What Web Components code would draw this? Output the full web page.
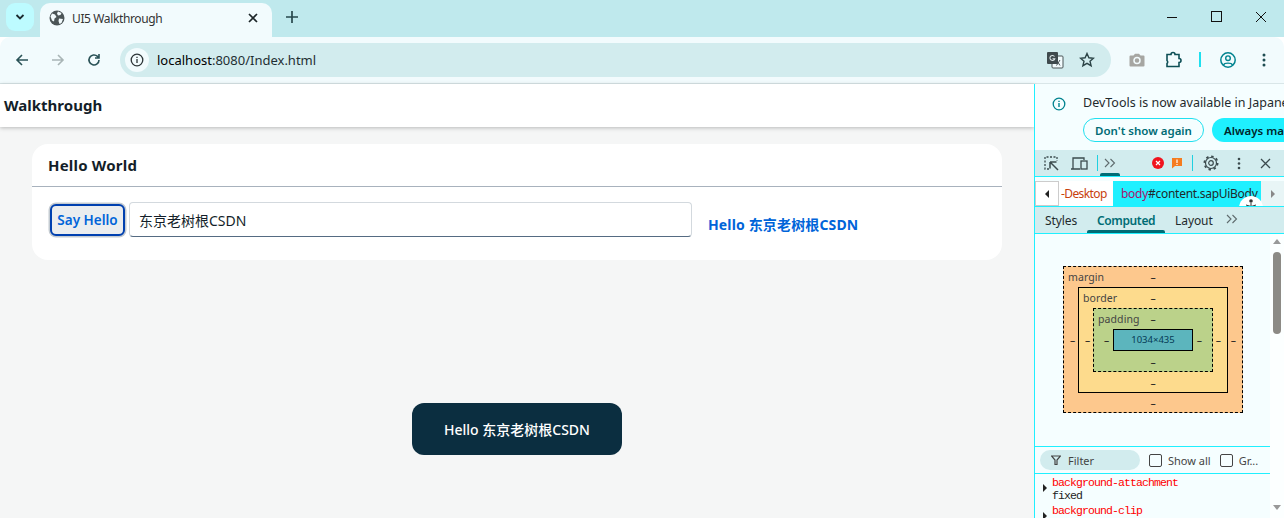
<!DOCTYPE html>
<html><head><meta charset="utf-8"><style>
html,body{margin:0;padding:0;height:518px;overflow:hidden}
body{font-family:"Noto Sans","Noto Sans CJK SC",sans-serif;display:flex;flex-direction:column}
</style></head><body>
<browser-chrome></browser-chrome>
<div style="display:flex;height:434px">
<ui5-page></ui5-page>
<dev-tools></dev-tools>
</div>
<script>
const def=(n,html)=>customElements.define(n,class extends HTMLElement{constructor(){super();this.attachShadow({mode:'open'}).innerHTML=html}});
def('browser-chrome',`<style>
:host{display:block;height:84px;flex:none;font-family:"Noto Sans","Open Sans",sans-serif}
svg{display:block;flex:none}
.strip{height:37px;background:#bfe9ed;display:flex;box-sizing:border-box;position:relative}
.tabsearch{width:28px;height:28px;margin:3px 0 0 6px;border-radius:9px;background:#bdfbff;display:flex;align-items:center;justify-content:center}
.tab{width:232px;height:34px;margin:3px 0 0 6px;background:#f2fbfd;border-radius:10px 10px 0 0;display:flex;align-items:center;box-sizing:border-box;padding:0 14px 4px 9px;font-size:12px;color:#333;gap:7px}
.tab span{flex:1;letter-spacing:-.38px}
.plus{margin:10px 0 0 13px}
.win{margin-left:auto;display:flex;align-items:center;height:34px}
.win div{width:45px;height:34px;display:flex;align-items:center;justify-content:center}
.bar{height:47px;background:#f2fbfd;box-sizing:border-box;border-bottom:1px solid #d9e6e8;display:flex;align-items:center;padding:0 0 1px 14px;border-radius:10px 10px 0 0}
.nav{display:flex;gap:20px;width:106px}
.omni{width:991px;height:34px;background:#d2ecee;border-radius:17px;display:flex;align-items:center;box-sizing:border-box;padding:0 16px 0 5px;font-size:13px;color:#1f2f33}
.info{width:24px;height:24px;border-radius:50%;background:#f2fbfd;display:flex;align-items:center;justify-content:center;margin-right:8px}
.omni b{font-weight:400;color:#000}
.omni .sp{flex:1}
.right{display:flex;align-items:center}
</style>
<div class="strip">
<div class="tabsearch"><svg width="12" height="12" viewBox="0 0 12 12"><path d="M2.500 4l3.500 3.500L9.500 4" fill="none" stroke="#1b2b2f" stroke-width="1.800"/></svg></div>
<div class="tab"><svg width="16" height="16" viewBox="0 0 16 16"><circle cx="8" cy="8" r="7.500" fill="#4b5557"/><path d="M3 3.500l3 1 1.500 2.500-2 1.500-.5 3-2-1-1.500-4zM9 1.500l3.500 1.500-1 2-2.500.5-1-2zM10 8.500l4 .5-1.500 4-2 1-1-3z" fill="#f2fbfd"/></svg><span>UI5 Walkthrough</span><svg width="10" height="10" viewBox="0 0 10 10"><path d="M1 1l8 8M9 1L1 9" stroke="#1d2629" stroke-width="1.700"/></svg></div>
<svg class="plus" width="14" height="14" viewBox="0 0 14 14"><path d="M7 1v12M1 7h12" stroke="#27484c" stroke-width="1.700"/></svg>
<div class="win"><div><svg width="12" height="12"><path d="M1 6.500h10" stroke="#111"/></svg></div><div><svg width="12" height="12"><rect x=".5" y=".5" width="10" height="10" fill="none" stroke="#111" stroke-width="1"/></svg></div><div><svg width="12" height="12" style="margin-right:2px"><path d="M1 1l10 10M11 1L1 11" stroke="#111"/></svg></div></div>
</div>
<div class="bar">
<div class="nav">
<svg width="16" height="16" viewBox="0 0 16 16"><path d="M14 8H3M8 3L3 8l5 5" fill="none" stroke="#2a5257" stroke-width="1.600"/></svg>
<svg width="16" height="16" viewBox="0 0 16 16"><path d="M2 8h11M8 3l5 5-5 5" fill="none" stroke="#a9b5b6" stroke-width="1.600"/></svg>
<svg width="16" height="16" viewBox="0 0 16 16"><path d="M13 8a5 5 0 1 1-1.500-3.600L13 6M13 2v4H9" fill="none" stroke="#2a5257" stroke-width="1.600"/></svg>
</div>
<div class="omni"><div class="info"><svg width="14" height="14" viewBox="0 0 14 14"><circle cx="7" cy="7" r="5.800" fill="none" stroke="#2c3437" stroke-width="1.300"/><path d="M7 6v4M7 3.700v1.300" stroke="#2c3437" stroke-width="1.300"/></svg></div><span><b>localhost</b>:8080/Index.html</span><span class="sp"></span>
<svg width="18" height="18" viewBox="0 0 18 18" style="margin-right:15px"><rect x="6" y="5" width="11" height="12" rx="1" fill="#f2fbfd" stroke="#4b5557"/><path d="M10.500 9l3.500 5.500M14 9l-3.500 5.500" fill="none" stroke="#4b5557"/><rect x="1" y="1" width="11" height="12" rx="1" fill="#3f4a4d"/><path d="M8.500 5.500a2.500 2.500 0 1 0 .3 2.300H6.500" fill="none" stroke="#dfe8ea" stroke-width="1.100"/></svg>
<svg width="16" height="16" viewBox="0 0 16 16"><path d="M8 1.500l1.900 4.300 4.600.4-3.500 3 1.100 4.500L8 11.300l-4.100 2.400L5 9.200l-3.500-3 4.600-.4z" fill="none" stroke="#2c4447" stroke-width="1.400"/></svg>
</div>
<div class="right">
<svg style="margin-left:18px" width="16" height="14" viewBox="0 0 16 14"><path d="M1.500 2.500h3L6 .8h4l1.500 1.700h3a1 1 0 0 1 1 1v9a1 1 0 0 1-1 1h-13a1 1 0 0 1-1-1v-9a1 1 0 0 1 1-1z" fill="#a6a6a2"/><circle cx="8" cy="7.500" r="3" fill="none" stroke="#f2fbfd" stroke-width="1.500"/></svg>
<svg style="margin-left:20px" width="18" height="18" viewBox="0 0 18 18"><path d="M1.500 4.500h4a2 2 0 0 1 4 0h4v4a2 2 0 0 1 0 4v4H1.500v-3a2 2 0 0 0 0-3z" transform="translate(.5 -1)" fill="none" stroke="#0e4f56" stroke-width="1.600"/></svg>
<div style="width:2px;height:15px;background:#1fe0ef;margin-left:16px"></div>
<svg style="margin-left:18px" width="18" height="18" viewBox="0 0 18 18"><circle cx="9" cy="9" r="7.200" fill="none" stroke="#00838f" stroke-width="1.500"/><circle cx="9" cy="7.200" r="2.300" fill="none" stroke="#00838f" stroke-width="1.400"/><path d="M4.500 14c1-2.500 8-2.500 9 0" fill="none" stroke="#00838f" stroke-width="1.400"/></svg>
<svg style="margin-left:25px" width="4" height="14" viewBox="0 0 4 14"><circle cx="2" cy="2" r="1.500" fill="#1f4d52"/><circle cx="2" cy="7" r="1.500" fill="#1f4d52"/><circle cx="2" cy="12" r="1.500" fill="#1f4d52"/></svg>
</div>
</div>`);
def('ui5-page',`<style>
:host{display:block;width:1034px;flex:none;background:#f5f6f6;position:relative;font-family:"Noto Sans","Noto Sans CJK SC",sans-serif;color:#131e29}
.shell{height:43px;box-sizing:border-box;padding:0 0 1px 4px;background:#fff;box-shadow:0 1px 4px rgba(0,0,0,.25);display:flex;align-items:center;font-weight:700;font-size:15px;letter-spacing:.02px;position:relative}
.wrap{padding:17px 32px 0}
.card{width:970px;height:116px;background:#fff;border-radius:16px;display:flex;flex-direction:column}
.head{height:43px;border-bottom:1px solid #a8b2bd;box-sizing:border-box;display:flex;align-items:center;padding:0 16px;font-weight:700;font-size:15px;letter-spacing:.2px}
.body{display:flex;align-items:flex-start;padding:15px 0 0 18px}
.btn{width:71px;height:28px;border:2px solid #0040b0;border-radius:6px;background:#ebedef;color:#0064d9;font-weight:600;font-size:13.500px;display:flex;align-items:center;justify-content:center;margin:2px 0 0;box-shadow:0 0 0 1.500px #c4cbd1}
.in{width:563px;height:35px;box-sizing:border-box;margin-left:4px;border:1px solid #d3d9de;border-bottom:1px solid #556b82;border-radius:4px;font-size:14px;display:flex;align-items:center;padding:0 9px;color:#131e29}
.out{margin:12px 0 0 16px;font-size:14px;font-weight:700;color:#0064d9;letter-spacing:.15px}
.toast{position:absolute;left:412px;top:319px;width:210px;height:52px;border-radius:12px;background:#0b2e40;color:#fff;font-size:14px;font-weight:500;display:flex;align-items:center;justify-content:center}
</style>
<div class="shell">Walkthrough</div>
<div class="wrap"><div class="card"><div class="head">Hello World</div>
<div class="body"><div class="btn">Say Hello</div><div class="in">东京老树根CSDN</div><div class="out">Hello 东京老树根CSDN</div></div></div></div>
<div class="toast">Hello 东京老树根CSDN</div>`);
def('dev-tools',`<style>
:host{display:flex;flex-direction:column;width:250px;flex:none;box-sizing:border-box;border-left:1px solid #1ff0ff;background:#f5feff;font-family:"Noto Sans","Open Sans",sans-serif;font-size:12px;color:#1f2a2c;overflow:hidden;position:relative}
svg{display:block;flex:none}
.info{height:66px;flex:none;box-sizing:border-box;padding:10px 0 0 48px;position:relative;white-space:nowrap;font-size:12.500px}
.info>svg{position:absolute;left:17px;top:13px}
.btns{display:flex;gap:8px;margin-top:7px;font-weight:600;font-size:11.500px}
.b{height:24px;width:121px;justify-content:center;border-radius:12px;box-sizing:border-box;display:flex;align-items:center;border:1px solid #1fe0ef;color:#006c75;flex:none}
.b.f{background:#1ff0ff;color:#00262b;width:90px;border:0;justify-content:flex-start;padding-left:12px}
.tools{height:26px;flex:none;background:#d2ecee;border-bottom:1px solid #1ff0ff;display:flex;align-items:center;padding-left:8px;position:relative}
.sep{width:1px;height:16px;background:#1fd0e0;flex:none}
.ul{position:absolute;left:65px;bottom:0;width:20px;height:3px;background:#006c75;border-radius:2px 2px 0 0}
.bc{height:25px;margin-top:4px;flex:none;display:flex;align-items:center;background:#f5feff;position:relative;font-size:12px;white-space:nowrap;letter-spacing:-.28px}
.ar{width:24px;height:25px;box-sizing:border-box;background:#fff;border:1px solid #ccc;display:flex;align-items:center;justify-content:center;flex:none}
.d{color:#c8410d;width:54px;flex:none;box-sizing:border-box;padding-left:2px;background:#fff;height:25px;line-height:25px;letter-spacing:-.6px}
.cur{background:#1ff0ff;width:148px;height:25px;line-height:25px;padding-left:8px;box-sizing:border-box;overflow:hidden;flex:none}
.cur i{font-style:normal;color:#a8106c}
.ar2{width:23px;height:25px;background:#e8f5f6;display:flex;align-items:center;justify-content:center;flex:none}
.dock{position:absolute;left:204px;top:15px;width:24px;height:24px;border-radius:50%;background:#fff;display:flex;justify-content:center;padding-top:3px;box-sizing:border-box}
.tabs{height:26px;flex:none;background:#d2ecee;border-top:1px solid #1ff0ff;border-bottom:1px solid #1ff0ff;display:flex;align-items:center;font-size:12px;position:relative}
.tabs span{padding:0 10px;letter-spacing:-.1px}
.tabs .on{color:#006c75;font-weight:600;width:78px;box-sizing:border-box;padding:0;text-align:center;letter-spacing:-.35px}
.ul2{position:absolute;left:52px;bottom:0;width:78px;height:3px;background:#006c75;border-radius:2px 2px 0 0}
.main{flex:1;display:flex;min-height:0}
.left{width:235px;flex:none;display:flex;flex-direction:column}
.scroll{width:14px;background:#fcffff;flex:none;display:flex;flex-direction:column;align-items:center;position:relative}
.tri{width:0;height:0;border-left:4.500px solid transparent;border-right:4.500px solid transparent}
.thumb{width:8px;height:82px;background:#8d8a85;border-radius:5px;margin-top:8px}
.model{height:212px;flex:none;box-sizing:border-box;padding:32px 0 0 28px}
.bx{position:relative;box-sizing:border-box;display:flex;align-items:center;justify-content:center;font-size:10.500px;color:#222}
.bx>.l{position:absolute;left:4px;top:3px;color:#444;letter-spacing:.1px}
.bx>.t{position:absolute;left:0;right:0;text-align:center;top:3px}
.bx>.bt{position:absolute;left:0;right:0;text-align:center;bottom:2px}
.bx>.lf{position:absolute;left:6px;top:50%;transform:translateY(-50%)}
.bx>.rt{position:absolute;right:6px;top:50%;transform:translateY(-50%)}
.p>.lf{left:10px}
.p>.rt{right:10px}
.m{width:180px;height:147px;background:#fdc88d;border:1px dashed #000}
.bo{width:150px;height:106px;background:#fddb8d;border:1px solid #000}
.p{width:120px;height:64px;background:#bbd28a;border:1px dashed #000}
.c{width:80px;height:22px;box-sizing:border-box;background:#5cb5bd;border:1px solid #000;display:flex;align-items:center;justify-content:center;color:#053a55;position:absolute;left:19px;top:20px;font-size:9.500px}
.filter{height:26px;flex:none;border-top:1px solid #1ff0ff;border-bottom:1px solid #1ff0ff;display:flex;align-items:center;padding-left:5px;font-size:11px;color:#444;white-space:nowrap}
.fi{width:100px;height:20px;background:#d2ecee;border-radius:10px;display:flex;align-items:center;padding-left:11px;gap:7px;box-sizing:border-box;flex:none}
.cb{width:11px;height:11px;border:1px solid #444;border-radius:2px;flex:none;margin:0 6px 0 9px}
.props{flex:1;font:11.500px/12px "Liberation Mono","DejaVu Sans Mono",monospace;letter-spacing:-.9px;padding:3px 0 0 17px;position:relative;color:#222}
.props i{font-style:normal;color:#f00;display:block}
.props u{position:absolute;left:8px;text-decoration:none;width:0;height:0;border-top:4px solid transparent;border-bottom:4px solid transparent;border-left:4px solid #222}
</style>
<div class="info"><svg width="14" height="14" viewBox="0 0 14 14"><circle cx="7" cy="7" r="5.800" fill="none" stroke="#00838f" stroke-width="1.300"/><path d="M7 6v4M7 3.700v1.300" stroke="#00838f" stroke-width="1.400"/></svg>
DevTools is now available in Japanese
<div class="btns"><div class="b">Don't show again</div><div class="b f">Always match</div></div></div>
<div class="tools">
<svg width="17" height="17" viewBox="0 0 17 17" style="margin-right:10px"><path d="M6 14H2V2h12v4" fill="none" stroke="#3b4b4e" stroke-width="1.300" stroke-dasharray="2 1.500"/><path d="M7 7h6.500M7 7v6.500M7 7l8 8" fill="none" stroke="#3b4b4e" stroke-width="1.500"/></svg>
<svg width="18" height="15" viewBox="0 0 18 15" style="margin-right:9px"><path d="M1 13h9M3 13V2h11v2" fill="none" stroke="#3b4b4e" stroke-width="1.300"/><rect x="11" y="5" width="6" height="8" fill="none" stroke="#3b4b4e" stroke-width="1.300"/></svg>
<div class="sep"></div>
<svg width="12" height="10" viewBox="0 0 12 10" style="margin:0 36px 0 6px"><path d="M1 1l4 4-4 4M6.500 1l4 4-4 4" fill="none" stroke="#5f6b6e" stroke-width="1.100"/></svg>
<svg width="12" height="12" viewBox="0 0 12 12" style="margin-right:7px"><circle cx="6" cy="6" r="6" fill="#f0141e"/><path d="M4 4l4 4M8 4l-4 4" stroke="#fff" stroke-width="1.200"/></svg>
<svg width="12" height="12" viewBox="0 0 12 12" style="margin-right:9px"><path d="M1 1h10v8H4l-3 2.500z" fill="#f57c1f"/><path d="M6 2.500v3.500M6 7v1" stroke="#fff" stroke-width="1.200"/></svg>
<div class="sep" style="margin-right:10px"></div>
<svg width="16" height="16" viewBox="0 0 16 16" style="margin-right:18px"><circle cx="8" cy="8" r="2.300" fill="none" stroke="#3b4b4e" stroke-width="1.200"/><circle cx="8" cy="8" r="5.500" fill="none" stroke="#3b4b4e" stroke-width="1.200"/><circle cx="8" cy="8" r="6.600" fill="none" stroke="#3b4b4e" stroke-width="1.800" stroke-dasharray="2.400 2.780"/></svg>
<svg width="4" height="13" viewBox="0 0 4 13" style="margin-right:19px"><circle cx="2" cy="2" r="1.300" fill="#3b4b4e"/><circle cx="2" cy="6.500" r="1.300" fill="#3b4b4e"/><circle cx="2" cy="11" r="1.300" fill="#3b4b4e"/></svg>
<svg width="11" height="11" viewBox="0 0 11 11"><path d="M1 1l9 9M10 1l-9 9" stroke="#3b4b4e" stroke-width="1.300"/></svg>
<div class="ul"></div></div>
<div class="bc"><div class="ar"><div style="width:0;height:0;border-top:4px solid transparent;border-bottom:4px solid transparent;border-right:4px solid #222"></div></div><div class="d">-Desktop</div><div class="cur"><i>body</i>#content.sapUiBody</div><div class="ar2"><div style="width:0;height:0;border-top:4px solid transparent;border-bottom:4px solid transparent;border-left:4px solid #888"></div></div>
<div class="dock"><svg width="12" height="10" viewBox="0 0 12 10"><circle cx="6" cy="2" r="1.800" fill="#333"/><path d="M1 6l5 1.500L11 6M6 4v4" stroke="#333" fill="none"/></svg></div></div>
<div class="tabs"><span>Styles</span><span class="on">Computed</span><span>Layout</span><svg width="12" height="10" viewBox="0 0 12 10" style="margin:-3px 0 0 3px"><path d="M1 1l4 4-4 4M6.500 1l4 4-4 4" fill="none" stroke="#5f6b6e" stroke-width="1.100"/></svg><div class="ul2"></div></div>
<div class="main"><div class="left">
<div class="model"><div class="bx m"><span class="l">margin</span><span class="t">–</span><span class="bt">–</span><span class="lf">–</span><span class="rt">–</span>
<div class="bx bo"><span class="l">border</span><span class="t">–</span><span class="bt">–</span><span class="lf">–</span><span class="rt">–</span>
<div class="bx p"><span class="l">padding</span><span class="t">–</span><span class="bt">–</span><span class="lf">–</span><span class="rt">–</span><div class="c">1034×435</div></div></div></div></div>
<div class="filter"><div class="fi"><svg width="10" height="10" viewBox="0 0 10 10"><path d="M.5 1h9L6 5v4.500H4V5z" fill="none" stroke="#444" stroke-width="1.200"/></svg>Filter</div><div class="cb"></div>Show all<div class="cb"></div>Gr...</div>
<div class="props"><u style="top:10px"></u><i>background-attachment</i><div style="margin-top:1px">fixed</div><u style="top:38px"></u><i style="margin-top:3px">background-clip</i>border-box</div>
</div>
<div class="scroll"><div class="tri" style="border-bottom:5px solid #999;margin-top:5px"></div><div class="thumb"></div><div class="tri" style="border-top:5px solid #999;margin-top:auto;margin-bottom:8px"></div></div></div>`);
</script>
</body></html>
